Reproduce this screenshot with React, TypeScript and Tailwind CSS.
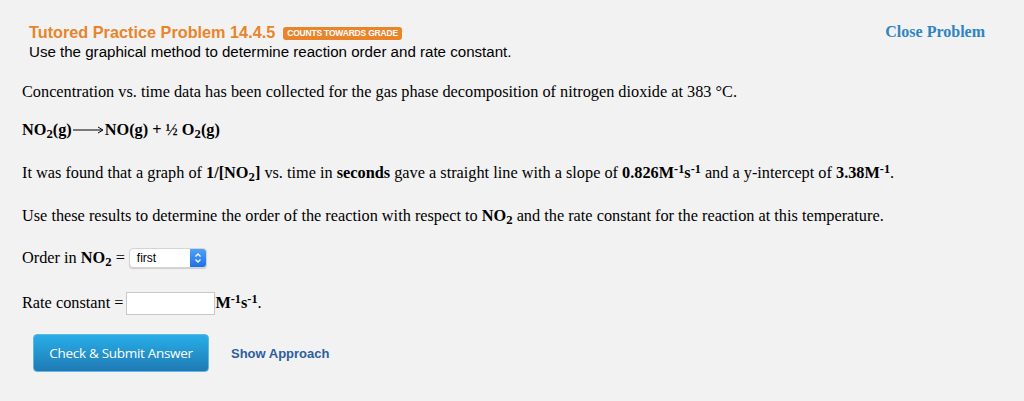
import React from 'react'

const serif = "font-['Liberation_Serif','Times_New_Roman',serif]"
const sans = "font-['Liberation_Sans',Arial,sans-serif]"

function Sub({ children }: { children: React.ReactNode }) {
  return <sub className="text-[0.78em] relative top-[0.22em] align-baseline">{children}</sub>
}

function Sup({ children }: { children: React.ReactNode }) {
  return <sup className="text-[0.75em] relative -top-[0.45em] align-baseline">{children}</sup>
}

function LongArrow() {
  return (
    <svg width="31" height="10" viewBox="0 0 31 10" className="inline-block align-baseline mx-[1px]">
      <path d="M0 5 H29" stroke="black" strokeWidth="1" />
      <path d="M25 2 L30 5 L25 8" fill="none" stroke="black" strokeWidth="1" />
    </svg>
  )
}

export default function App() {
  return (
    <div className="w-[1024px] h-[401px] bg-[#f2f2f2] overflow-hidden">
      {/* header */}
      <div className="flex justify-between pl-[29px] pr-[39px] pt-[22px]">
        <div>
          <div className="flex items-center gap-[8px]">
            <span className={`${sans} font-bold text-[16.25px] text-[#e9842b] leading-[20px]`}>
              Tutored Practice Problem 14.4.5
            </span>
            <span className={`${sans} font-bold text-[8.5px] text-white bg-[#e9842b] rounded-[3px] px-[4px] h-[13px] leading-[13px] tracking-[-0.2px] mt-[2px]`}>
              COUNTS TOWARDS GRADE
            </span>
          </div>
          <div className={`${sans} text-[15.1px] text-black leading-[20px]`}>
            Use the graphical method to determine reaction order and rate constant.
          </div>
        </div>
        <div className={`${serif} font-bold text-[16px] text-[#2f85c2] leading-[20px]`}>Close Problem</div>
      </div>

      {/* body */}
      <div className={`${serif} text-[16.3px] text-black leading-[18px] pl-[22px] pt-[21px]`}>
        <p>Concentration vs. time data has been collected for the gas phase decomposition of nitrogen dioxide at 383 °C.</p>
        <p className="mt-[20px] font-bold">
          NO<Sub>2</Sub>(g)<LongArrow />NO(g) + ½ O<Sub>2</Sub>(g)
        </p>
        <p className="mt-[25px]">
          It was found that a graph of <b>1/[NO<Sub>2</Sub>]</b> vs. time in <b>seconds</b> gave a straight line with a slope of{' '}
          <b>0.826M<Sup>-1</Sup>s<Sup>-1</Sup></b> and a y-intercept of <b>3.38M<Sup>-1</Sup></b>.
        </p>
        <p className="mt-[25px]">
          Use these results to determine the order of the reaction with respect to <b>NO<Sub>2</Sub></b> and the rate constant for the reaction at this temperature.
        </p>
        <div className="mt-[22px] flex items-center gap-[4px] h-[22px]">
          <span>Order in <b>NO<Sub>2</Sub></b> =</span>
          <div className="flex items-center w-[78px] h-[20px] bg-white rounded-[4px] border border-[#d4d4d4] shadow-[0_1px_1px_rgba(0,0,0,0.15)] overflow-hidden">
            <span className={`flex-1 pl-[7px] ${sans} text-[12px] leading-[18px]`}>first</span>
            <span className="w-[16px] h-full bg-gradient-to-b from-[#4da2f8] to-[#1f6fe5] flex items-center justify-center">
              <svg width="8" height="12" viewBox="0 0 8 12" fill="none" stroke="white" strokeWidth="1.3">
                <path d="M1.5 4.5 L4 2 L6.5 4.5" />
                <path d="M1.5 7.5 L4 10 L6.5 7.5" />
              </svg>
            </span>
          </div>
        </div>
        <div className="mt-[22px] flex items-center h-[24px]">
          <span>Rate constant =</span>
          <span className="ml-[3px] w-[89px] h-[23px] bg-white border border-[#c8c8c8]" />
          <span><b>M<Sup>-1</Sup>s<Sup>-1</Sup></b>.</span>
        </div>
      </div>

      {/* actions */}
      <div className="flex items-center pl-[33px] pt-[19px] gap-[22px]">
        <button className="w-[176px] h-[38px] rounded-[4px] border border-[#5fb6e0] bg-gradient-to-b from-[#28aee8] to-[#1f7ab4] text-white font-['Open_Sans','Liberation_Sans',sans-serif] text-[13.5px] tracking-[-0.3px]">
          Check &amp; Submit Answer
        </button>
        <span className={`${sans} font-bold text-[13px] text-[#2c5ea0] mt-[2px]`}>Show Approach</span>
      </div>
    </div>
  )
}
